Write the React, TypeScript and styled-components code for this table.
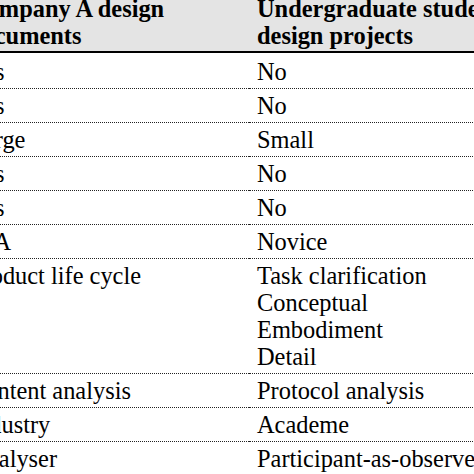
import React from "react";
import styled, { createGlobalStyle } from "styled-components";

const Global = createGlobalStyle`
  html, body { margin: 0; padding: 0; background: #ffffff; }
  body { overflow: hidden; }
`;

const Page = styled.div`
  width: 474px;
  height: 474px;
  overflow: hidden;
  background: #ffffff;
`;

const Table = styled.table`
  border-collapse: collapse;
  margin-top: -8px;
  margin-left: -39px;
  font-family: "Liberation Serif", "Times New Roman", serif;
  font-size: 24.4px;
  line-height: 27px;
  color: #000000;
  table-layout: fixed;
  width: 622px;
`;

const Col = styled.col<{ $w: number }>`
  width: ${(p) => p.$w}px;
`;

const HeadRow = styled.tr`
  background: #e4e4e4;
  border-bottom: 2px solid #000000;
`;

const HeadCell = styled.th`
  text-align: left;
  font-weight: 700;
  padding: 3px 8px 2px;
  white-space: nowrap;
  vertical-align: top;
`;

const Row = styled.tr`
  border-bottom: 1px dotted #222222;
  &:first-child td {
    padding-top: 5px;
  }
`;

const Cell = styled.td`
  padding: 3px 8px 3px;
  white-space: nowrap;
  vertical-align: top;
`;

const Line = styled.div`
  display: block;
`;

type RowData = { left: string; right: string[] };

const rows: RowData[] = [
  { left: "Yes", right: ["No"] },
  { left: "Yes", right: ["No"] },
  { left: "Large", right: ["Small"] },
  { left: "Yes", right: ["No"] },
  { left: "Yes", right: ["No"] },
  { left: "N/A", right: ["Novice"] },
  {
    left: "Product life cycle",
    right: ["Task clarification", "Conceptual", "Embodiment", "Detail"],
  },
  { left: "Content analysis", right: ["Protocol analysis"] },
  { left: "Industry", right: ["Academe"] },
  { left: "Analyser", right: ["Participant-as-observer"] },
  { left: "Yes", right: ["No"] },
];

export default function App() {
  return (
    <Page>
      <Global />
      <Table>
        <colgroup>
          <Col $w={288} />
          <Col $w={334} />
        </colgroup>
        <thead>
          <HeadRow>
            <HeadCell>
              <Line>Company A design</Line>
              <Line>documents</Line>
            </HeadCell>
            <HeadCell>
              <Line>Undergraduate student</Line>
              <Line>design projects</Line>
            </HeadCell>
          </HeadRow>
        </thead>
        <tbody>
          {rows.map((r, i) => (
            <Row key={i}>
              <Cell>{r.left}</Cell>
              <Cell>
                {r.right.map((t) => (
                  <Line key={t}>{t}</Line>
                ))}
              </Cell>
            </Row>
          ))}
        </tbody>
      </Table>
    </Page>
  );
}
